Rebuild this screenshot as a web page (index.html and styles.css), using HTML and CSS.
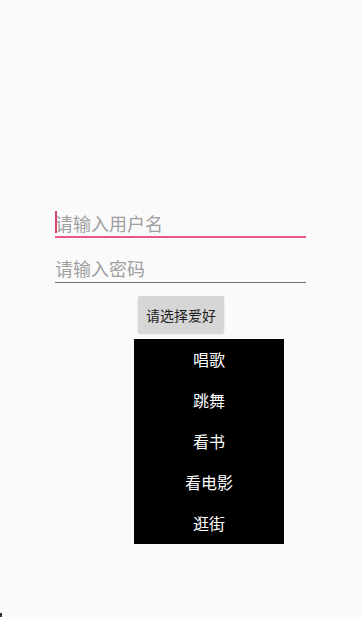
FILE: index.html
```html
<!DOCTYPE html>
<html>
<head>
<meta charset="utf-8">
<link rel="stylesheet" href="styles.css">
</head>
<body>
<div class="screen">
  <div class="form">
    <div class="field focused">
      <span class="cursor"></span>
      <span class="hint">请输入用户名</span>
    </div>
    <div class="field">
      <span class="hint">请输入密码</span>
    </div>
    <div class="btn-row">
      <button class="btn">请选择爱好</button>
    </div>
  </div>
  <ul class="popup">
    <li>唱歌</li>
    <li>跳舞</li>
    <li>看书</li>
    <li>看电影</li>
    <li>逛街</li>
  </ul>
  <span class="corner"></span>
</div>
</body>
</html>
```
FILE: styles.css
```css
html, body {
  margin: 0;
  padding: 0;
  background: #fafafa;
}
.screen {
  position: relative;
  width: 361px;
  height: 617px;
  overflow: hidden;
  font-family: "Noto Sans CJK SC", "Noto Sans", sans-serif;
}
.form {
  padding-top: 203px;
  display: flex;
  flex-direction: column;
  align-items: center;
}
.field {
  position: relative;
  width: 251px;
  height: 35px;
  border-bottom: 1px solid #757575;
  display: flex;
  align-items: center;
  margin-bottom: 9px;
  box-sizing: content-box;
}
.field.focused {
  height: 33px;
  border-bottom: 2px solid #e8578b;
  margin-bottom: 9px;
}
.hint {
  font-size: 18px;
  color: #a0a0a0;
  line-height: 22px;
  padding-top: 6px;
}
.cursor {
  position: absolute;
  left: 0;
  top: 8px;
  width: 2px;
  height: 22px;
  background: #d6456f;
}
.btn-row {
  padding-top: 4px;
}
.btn {
  width: 86px;
  height: 37px;
  margin: 0 0 0 1px;
  border: none;
  border-radius: 2px;
  background: #d6d6d6;
  box-shadow: 0 1px 2px rgba(0,0,0,0.18);
  font-family: "Noto Sans CJK SC", "Noto Sans", sans-serif;
  font-size: 14px;
  color: #1e1e1e;
  padding: 0;
}
.popup {
  position: absolute;
  left: 134px;
  top: 339px;
  width: 150px;
  margin: 0;
  padding: 0;
  list-style: none;
  background: #000;
}
.popup li {
  height: 41px;
  line-height: 41px;
  text-align: center;
  color: #fff;
  font-size: 16px;
}
.corner {
  position: absolute;
  left: 0;
  top: 613px;
  width: 2px;
  height: 4px;
  background: #333;
}
```
